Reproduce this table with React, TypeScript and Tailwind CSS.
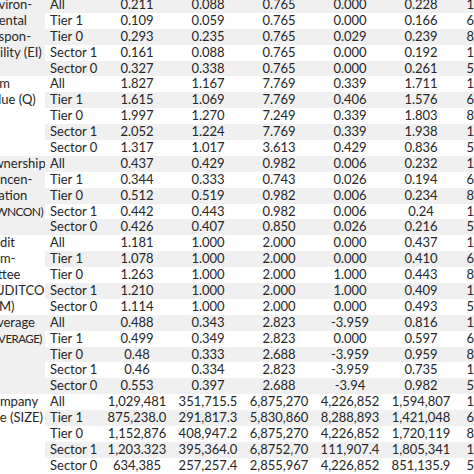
type Row = [string, string[]];

interface Group {
  lines: [string, string][];
  rows: Row[];
}

const N = ['1535', '664', '871', '1011', '524'];

const GROUPS: Group[] = [
  {
    lines: [['Environ-', ''], ['mental', 'ml-[4px]'], ['Respon-', ''], ['sibility (EI)', ''], ['', '']],
    rows: [
      ['All', ['0.211', '0.088', '0.765', '0.000', '0.228']],
      ['Tier 1', ['0.109', '0.059', '0.765', '0.000', '0.166']],
      ['Tier 0', ['0.293', '0.235', '0.765', '0.029', '0.239']],
      ['Sector 1', ['0.161', '0.088', '0.765', '0.000', '0.192']],
      ['Sector 0', ['0.327', '0.338', '0.765', '0.000', '0.261']],
    ],
  },
  {
    lines: [['Firm', ''], ['Value (Q)', ''], ['', ''], ['', ''], ['', '']],
    rows: [
      ['All', ['1.827', '1.167', '7.769', '0.339', '1.711']],
      ['Tier 1', ['1.615', '1.069', '7.769', '0.406', '1.576']],
      ['Tier 0', ['1.997', '1.270', '7.249', '0.339', '1.803']],
      ['Sector 1', ['2.052', '1.224', '7.769', '0.339', '1.938']],
      ['Sector 0', ['1.317', '1.017', '3.613', '0.429', '0.836']],
    ],
  },
  {
    lines: [['Ownership', '-ml-[1px]'], ['Concen-', ''], ['tration', 'ml-[5px]'], ['(OWNCON)', 'text-[12px] tracking-[-0.6px]'], ['', '']],
    rows: [
      ['All', ['0.437', '0.429', '0.982', '0.006', '0.232']],
      ['Tier 1', ['0.344', '0.333', '0.743', '0.026', '0.194']],
      ['Tier 0', ['0.512', '0.519', '0.982', '0.006', '0.234']],
      ['Sector 1', ['0.442', '0.443', '0.982', '0.006', '0.24']],
      ['Sector 0', ['0.426', '0.407', '0.850', '0.026', '0.216']],
    ],
  },
  {
    lines: [['Audit', ''], ['Com-', ''], ['mittee', ''], ['(AUDITCO', '-ml-[1px]'], ['M)', 'ml-[15px]']],
    rows: [
      ['All', ['1.181', '1.000', '2.000', '0.000', '0.437']],
      ['Tier 1', ['1.078', '1.000', '2.000', '0.000', '0.410']],
      ['Tier 0', ['1.263', '1.000', '2.000', '1.000', '0.443']],
      ['Sector 1', ['1.210', '1.000', '2.000', '1.000', '0.409']],
      ['Sector 0', ['1.114', '1.000', '2.000', '0.000', '0.493']],
    ],
  },
  {
    lines: [['Leverage', ''], ['(LEVERAGE)', 'text-[11.5px] tracking-[-0.5px]'], ['', ''], ['', ''], ['', '']],
    rows: [
      ['All', ['0.488', '0.343', '2.823', '-3.959', '0.816']],
      ['Tier 1', ['0.499', '0.349', '2.823', '0.000', '0.597']],
      ['Tier 0', ['0.48', '0.333', '2.688', '-3.959', '0.959']],
      ['Sector 1', ['0.46', '0.334', '2.823', '-3.959', '0.735']],
      ['Sector 0', ['0.553', '0.397', '2.688', '-3.94', '0.982']],
    ],
  },
  {
    lines: [['Company', ''], ['Size (SIZE)', ''], ['', ''], ['', ''], ['', '']],
    rows: [
      ['All', ['1,029,481', '351,715.5', '6,875,270', '4,226,852', '1,594,807']],
      ['Tier 1', ['875,238.0', '291,817.3', '5,830,860', '8,288,893', '1,421,048']],
      ['Tier 0', ['1,152,876', '408,947.2', '6,875,270', '4,226,852', '1,720,119']],
      ['Sector 1', ['1,203.323', '395,364.0', '6,8752,70', '111,907.4', '1,805,341']],
      ['Sector 0', ['634,385', '257,257.4', '2,855,967', '4,226,852', '851,135.9']],
    ],
  },
];

export default function App() {
  return (
    <div className="w-[474px] h-[474px] overflow-hidden bg-white font-['Lato',sans-serif] text-[13px] text-[#262626]">
      <div className="-mt-[3px] -ml-[16px] w-[560px]">
        {GROUPS.map((g, gi) => {
          const first = gi * 5;
          return (
            <div key={gi} className="flex">
              {/* merged label cell */}
              <div className={`w-[61px] shrink-0 overflow-hidden ${first % 2 === 0 ? 'bg-[#f0f0f0]' : 'bg-white'}`}>
                {g.lines.map(([t, cls], li) => (
                  <div key={li} className={`h-[15.9px] leading-[15.9px] whitespace-nowrap ${cls}`}>
                    {t}
                  </div>
                ))}
              </div>
              <div className="flex-1">
                {g.rows.map(([label, vals], ri) => (
                  <div
                    key={ri}
                    className={`flex h-[15.9px] leading-[15.9px] whitespace-nowrap ${(first + ri) % 2 === 0 ? 'bg-[#f0f0f0]' : 'bg-white'}`}
                  >
                    <div className="w-[56.5px] shrink-0 pl-[5px]">{label}</div>
                    {vals.map((v, vi) => (
                      <div key={vi} className="w-[71px] shrink-0 text-center">{v}</div>
                    ))}
                    <div className="w-[71px] shrink-0 pl-[10px]">{N[ri]}</div>
                  </div>
                ))}
              </div>
            </div>
          );
        })}
      </div>
    </div>
  );
}
